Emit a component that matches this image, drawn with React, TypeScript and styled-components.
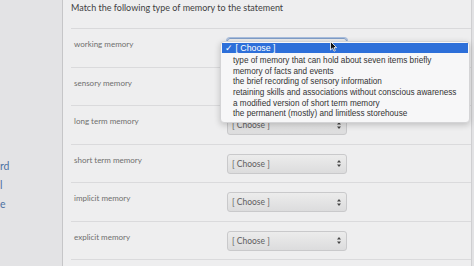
import styled, { createGlobalStyle } from 'styled-components'

const GlobalStyle = createGlobalStyle`
  html, body {
    margin: 0;
    padding: 0;
    background: #e2e2e4;
    font-family: Lato, "Open Sans", sans-serif;
  }
`

const Page = styled.div`
  display: flex;
  width: 474px;
  height: 266px;
  overflow: hidden;
  background: #e2e2e4;
`

const Sidebar = styled.nav`
  width: 62px;
  flex-shrink: 0;
  display: flex;
  flex-direction: column;
  padding-top: 161px;
  gap: 8px;
  background: #e3e3e5;
`

const SideLink = styled.div`
  font-size: 10.5px;
  line-height: 11px;
  color: #4d72a3;
`

const Main = styled.main`
  flex: 1;
  padding-left: 8px;
  background: #eeeeef;
  border-left: 1px solid #c6c6c8;
  border-right: 1px solid #cfcfd1;
  margin-right: 2px;
`

const Title = styled.div`
  height: 27px;
  padding-top: 1px;
  font-size: 9px;
  line-height: 14px;
  color: #3f3f3f;
  border-bottom: 1px solid #d9d9db;
`

const Row = styled.div`
  display: flex;
  height: 37.5px;
  border-bottom: 1px solid #dadadc;
`

const Label = styled.div`
  width: 153px;
  padding-left: 3px;
  padding-top: 10px;
  font-size: 8px;
  line-height: 10px;
  color: #6e6e6e;
`

const SelectCell = styled.div`
  position: relative;
  padding-top: 9px;
`

const SelectBox = styled.div<{ $focused?: boolean }>`
  display: flex;
  align-items: center;
  justify-content: space-between;
  box-sizing: border-box;
  width: 120px;
  height: 20px;
  padding: 0 5px 0 4px;
  border: 1px solid ${p => (p.$focused ? '#7f9dc8' : '#c9c9cb')};
  border-radius: 3px;
  background: linear-gradient(#ececec, #dcdcdd);
  box-shadow: ${p => (p.$focused ? '0 0 0 1px #a9bedd' : 'none')};
  font-size: 8.5px;
  color: #606060;
`

const Arrows = () => (
  <svg width="4" height="7" viewBox="0 0 4 7">
    <path d="M2 0 L4 2.6 H0 Z M2 7 L4 4.4 H0 Z" fill="#444" />
  </svg>
)

const Dropdown = styled.div`
  position: absolute;
  left: -7px;
  top: 12px;
  width: 250px;
  box-sizing: border-box;
  padding: 1px 1px 2px;
  background: #f7f7f8;
  border: 1px solid #d4d4d6;
  border-radius: 4px;
  box-shadow: 0 2px 6px rgba(0, 0, 0, 0.2);
  font-family: "Liberation Sans", Arial, sans-serif;
  z-index: 2;
`

const Option = styled.div<{ $active?: boolean }>`
  height: ${p => (p.$active ? '10px' : '10.7px')};
  margin-bottom: ${p => (p.$active ? '3px' : '0')};
  padding-left: ${p => (p.$active ? '3px' : '11px')};
  font-size: ${p => (p.$active ? '8.8px' : '8.2px')};
  line-height: ${p => (p.$active ? '10px' : '10.7px')};
  white-space: nowrap;
  color: ${p => (p.$active ? '#ffffff' : '#333333')};
  background: ${p => (p.$active ? '#2d6fd9' : 'transparent')};
`

const Cursor = styled.svg`
  position: absolute;
  left: 103px;
  top: 12px;
  z-index: 3;
`

const options = [
  'type of memory that can hold about seven items briefly',
  'memory of facts and events',
  'the brief recording of sensory information',
  'retaining skills and associations without conscious awareness',
  'a modified version of short term memory',
  'the permanent (mostly) and limitless storehouse'
]

const terms = [
  'working memory',
  'sensory memory',
  'long term memory',
  'short term memory',
  'implicit memory',
  'explicit memory'
]

export default function App (): JSX.Element {
  return (
    <>
      <GlobalStyle />
      <Page>
        <Sidebar>
          <SideLink>rd</SideLink>
          <SideLink>l</SideLink>
          <SideLink>e</SideLink>
        </Sidebar>
        <Main>
          <Title>Match the following type of memory to the statement</Title>
          {terms.map((term, i) => (
            <Row key={term}>
              <Label>{term}</Label>
              <SelectCell>
                <SelectBox $focused={i === 0}>
                  <span>[ Choose ]</span>
                  <Arrows />
                </SelectBox>
                {i === 0 && (
                  <>
                    <Dropdown>
                      <Option $active>✓ [ Choose ]</Option>
                      {options.map(o => <Option key={o}>{o}</Option>)}
                    </Dropdown>
                    <Cursor width="7" height="11" viewBox="0 0 7 11">
                      <path d="M0.5 0.5 V9 L2.6 7 L4 10.2 L5.3 9.6 L4 6.6 H6.6 Z" fill="#111" stroke="#fff" strokeWidth="0.8" />
                    </Cursor>
                  </>
                )}
              </SelectCell>
            </Row>
          ))}
        </Main>
      </Page>
    </>
  )
}
